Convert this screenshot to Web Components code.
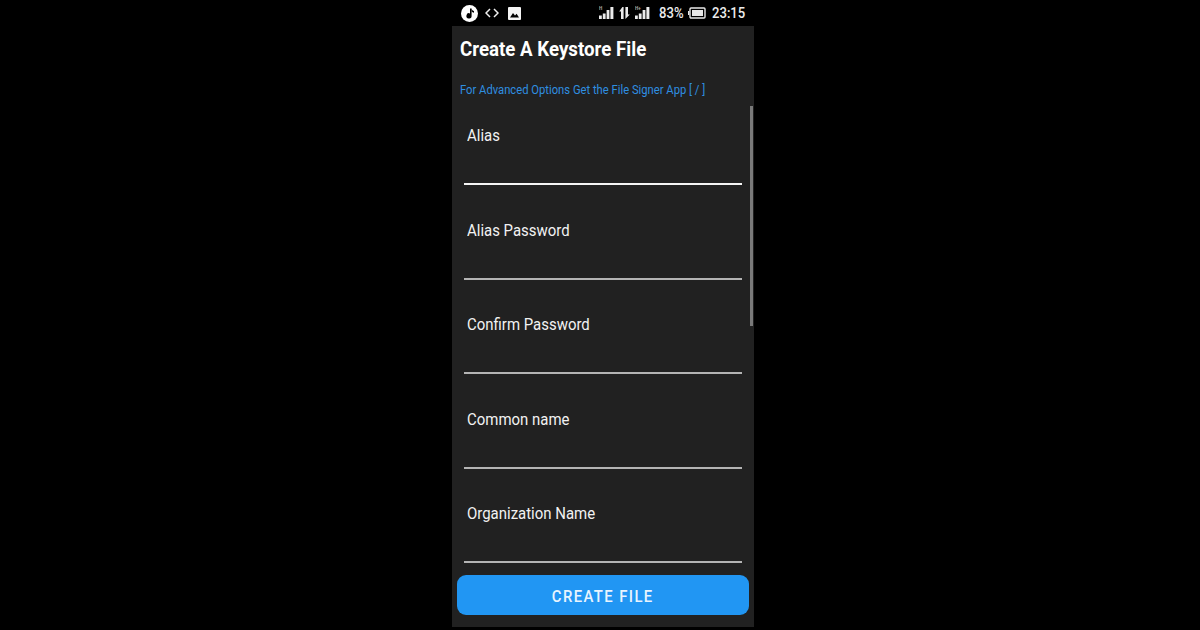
<!DOCTYPE html>
<html lang="en">
<head>
<meta charset="utf-8">
<title>Create A Keystore File</title>
<style>
  html, body { margin: 0; height: 100%; background: #000; overflow: hidden; }
  body { font-family: Roboto, "Liberation Sans", sans-serif; }
</style>
</head>
<body>
<ks-phone>
  <ks-status-bar slot="status"></ks-status-bar>
  <ks-screen heading="Create A Keystore File" link="For Advanced Options Get the File Signer App [ / ]">
    <ks-field label="Alias" focused></ks-field>
    <ks-field label="Alias Password"></ks-field>
    <ks-field label="Confirm Password"></ks-field>
    <ks-field label="Common name"></ks-field>
    <ks-field label="Organization Name"></ks-field>
    <ks-button slot="action">Create File</ks-button>
  </ks-screen>
</ks-phone>

<script>
// Le texte de la capture est légèrement comprimé en largeur
const SQUEEZE = 'display: inline-block; transform: scaleX(.935); transform-origin: 0 50%; white-space: nowrap;';

// Cadre du téléphone : barre d'état puis écran
class KsPhone extends HTMLElement {
  constructor() {
    super();
    this.attachShadow({ mode: 'open' }).innerHTML = `
      <style>
        :host { display: block; height: 630px; padding-left: 452px; }
        .frame { width: 302px; height: 627px; display: flex; flex-direction: column; }
      </style>
      <div class="frame">
        <slot name="status"></slot>
        <slot></slot>
      </div>`;
  }
}

class KsStatusBar extends HTMLElement {
  constructor() {
    super();
    // Barres de signal, réutilisées deux fois
    const bars = (net) => `
      <svg width="15" height="14" viewBox="0 0 15 14" fill="#ececec">
        <text x="0" y="4" font-size="4.5" font-weight="700" font-family="Roboto, sans-serif" opacity=".7">${net}</text>
        <rect x="0" y="9.5" width="2.8" height="3.5"/>
        <rect x="3.8" y="7.5" width="2.8" height="5.5"/>
        <rect x="7.6" y="4" width="2.8" height="9"/>
        <rect x="11.4" y="1" width="3" height="12"/>
      </svg>`;
    this.attachShadow({ mode: 'open' }).innerHTML = `
      <style>
        :host {
          display: flex; align-items: center; flex: 0 0 26px; box-sizing: border-box;
          padding: 0 8px 0 9px; color: #ececec;
          font: 500 14px Roboto, "Liberation Sans", sans-serif;
        }
        svg { display: block; flex: none; }
        .left { display: flex; align-items: center; }
        .right { margin-left: auto; display: flex; align-items: center; }
        .code { margin: 0 9px 0 7px; }
        .arrows { margin: 0 5px; }
        .pct { width: 24px; margin: 0 5px 0 9px; }
        .time { width: 34px; margin-left: 6px; }
        span span { ${SQUEEZE} }
      </style>
      <div class="left">
        <svg width="17" height="17" viewBox="0 0 17 17">
          <circle cx="8.5" cy="8.5" r="8.5" fill="#fff"/>
          <path d="M9 3.5h1.6v7.2a2.6 2.6 0 1 1-1.6-2.3z" fill="#000"/>
          <path d="M10.6 3.5c.3 1.5 1.2 2.2 2.4 2.6v1.6c-1.1-.2-1.9-.7-2.4-1.4z" fill="#000"/>
        </svg>
        <svg class="code" width="14" height="10" viewBox="0 0 14 10" fill="none" stroke="#f0f0f0" stroke-width="1.5">
          <path d="M5 1 1 5l4 4M9 1l4 4-4 4"/>
        </svg>
        <svg width="13" height="13" viewBox="0 0 13 13">
          <rect width="13" height="13" rx="1" fill="#f4f4f4"/>
          <path d="M2 10.5 5 6l2 2.5L8.6 6.8 11 10.5z" fill="#000"/>
        </svg>
      </div>
      <div class="right">
        ${bars('H')}
        <svg class="arrows" width="11" height="14" viewBox="0 0 11 14" fill="#ececec">
          <path d="M3.4 1 .2 5.4H2v7.6h2.6V1zM6.4 1v12L10.8 8.6H9V1z"/>
        </svg>
        ${bars('H+')}
        <span class="pct"><span>83%</span></span>
        <svg width="18" height="12" viewBox="0 0 18 12">
          <rect x="2" y="1" width="15" height="10" rx="1" fill="none" stroke="#e8e8e8" stroke-width="1.4"/>
          <rect x="0" y="4" width="1.4" height="4" fill="#e8e8e8"/>
          <rect x="4" y="3" width="11" height="6" fill="#e8e8e8"/>
        </svg>
        <span class="time"><span>23:15</span></span>
      </div>`;
  }
}

class KsScreen extends HTMLElement {
  constructor() {
    super();
    this.attachShadow({ mode: 'open' }).innerHTML = `
      <style>
        :host {
          display: flex; flex-direction: column; position: relative; height: 601px;
          background: #212121; overflow: hidden;
        }
        h1 {
          margin: 0; padding: 11px 8px 0; color: #fff;
          font: 700 20px/24px Roboto, "Liberation Sans", sans-serif;
        }
        a {
          display: block; padding: 21px 8px 0; color: #2f8fe0;
          font: 400 12px/16px Roboto, "Liberation Sans", sans-serif;
        }
        h1 span, a span { ${SQUEEZE} }
        .fields { flex: 1; min-height: 0; padding: 8px 12px 0 12px; overflow: hidden; }
        .scrollbar {
          position: absolute; left: 298px; top: 80px; width: 3px; height: 220px; background: #7a7a7a;
        }
        .action { padding: 0 5px 12px; }
      </style>
      <h1><span></span></h1>
      <a><span></span></a>
      <div class="fields"><slot></slot></div>
      <div class="action"><slot name="action"></slot></div>
      <div class="scrollbar"></div>`;
    this.shadowRoot.querySelector('h1 span').textContent = this.getAttribute('heading');
    this.shadowRoot.querySelector('a span').textContent = this.getAttribute('link');
  }
}

class KsField extends HTMLElement {
  constructor() {
    super();
    this.attachShadow({ mode: 'open' }).innerHTML = `
      <style>
        :host {
          display: block; box-sizing: border-box; height: 94.5px; padding-top: 18px; color: #f2f2f2;
          font: 400 16px/24px Roboto, "Liberation Sans", sans-serif;
        }
        label { display: block; padding-left: 3px; }
        label span { ${SQUEEZE} }
        .line { height: 2px; margin-top: 35px; background: #b4b4b4; }
        :host([focused]) .line { background: #f5f5f5; }
      </style>
      <label><span></span></label>
      <div class="line"></div>`;
    this.shadowRoot.querySelector('label span').textContent = this.getAttribute('label');
  }
}

class KsButton extends HTMLElement {
  constructor() {
    super();
    this.attachShadow({ mode: 'open' }).innerHTML = `
      <style>
        :host { display: block; }
        button {
          display: block; width: 100%; height: 40px; padding: 2px 0 0; border: 0; border-radius: 9px;
          background: #2196f3; color: #e8f4fe; text-transform: uppercase; letter-spacing: 1.5px;
          font: 500 16px Roboto, "Liberation Sans", sans-serif;
        }
        span { display: inline-block; transform: scaleX(.93); white-space: nowrap; }
      </style>
      <button type="button"><span><slot></slot></span></button>`;
  }
}

customElements.define('ks-phone', KsPhone);
customElements.define('ks-status-bar', KsStatusBar);
customElements.define('ks-screen', KsScreen);
customElements.define('ks-field', KsField);
customElements.define('ks-button', KsButton);
</script>
</body>
</html>
